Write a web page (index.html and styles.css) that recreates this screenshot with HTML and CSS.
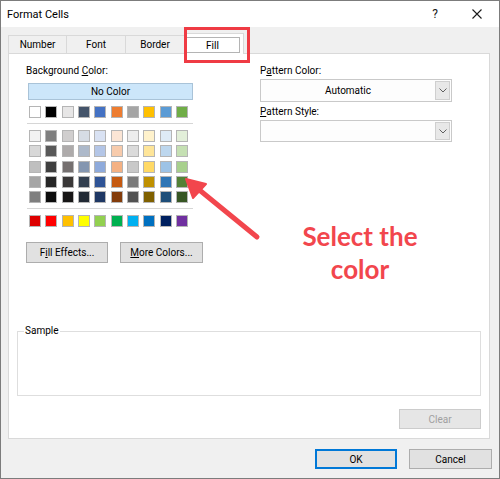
FILE: index.html
```html
<!DOCTYPE html>
<html>
<head>
<meta charset="utf-8">
<title>Format Cells</title>
<link rel="stylesheet" href="styles.css">
</head>
<body>
<div class="window">
  <div class="titlebar">
    <span class="title">Format Cells</span>
    <span class="help">?</span>
    <span class="close"><svg width="10" height="10" viewBox="0 0 10 10"><path d="M0.5 0.5 L9.5 9.5 M9.5 0.5 L0.5 9.5" stroke="#1a1a1a" stroke-width="1.1" fill="none"/></svg></span>
  </div>
  <div class="client">
    <div class="tabs">
      <div class="tab">Number</div>
      <div class="tab">Font</div>
      <div class="tab">Border</div>
      <div class="tab selected"><span class="focus">Fill</span></div>
    </div>
    <div class="panel">
      <div class="top">
        <div class="left">
          <div class="label">Background <u>C</u>olor:</div>
          <div class="nocolor">No Color</div>
          <div class="swatches theme">
            <span class="sw" style="background:#ffffff"></span>
            <span class="sw" style="background:#000000"></span>
            <span class="sw" style="background:#e7e6e6"></span>
            <span class="sw" style="background:#44546a"></span>
            <span class="sw" style="background:#4472c4"></span>
            <span class="sw" style="background:#ed7d31"></span>
            <span class="sw" style="background:#a5a5a5"></span>
            <span class="sw" style="background:#ffc000"></span>
            <span class="sw" style="background:#5b9bd5"></span>
            <span class="sw" style="background:#70ad47"></span>
          </div>
          <div class="sep"></div>
          <div class="swatches tints">
            <span class="sw" style="background:#f2f2f2"></span>
            <span class="sw" style="background:#7f7f7f"></span>
            <span class="sw" style="background:#d0cece"></span>
            <span class="sw" style="background:#d6dce4"></span>
            <span class="sw" style="background:#d9e2f3"></span>
            <span class="sw" style="background:#fbe5d5"></span>
            <span class="sw" style="background:#ededed"></span>
            <span class="sw" style="background:#fff2cc"></span>
            <span class="sw" style="background:#deebf6"></span>
            <span class="sw" style="background:#e2efd9"></span>

            <span class="sw" style="background:#d8d8d8"></span>
            <span class="sw" style="background:#595959"></span>
            <span class="sw" style="background:#aeabab"></span>
            <span class="sw" style="background:#adb9ca"></span>
            <span class="sw" style="background:#b4c6e7"></span>
            <span class="sw" style="background:#f7cbac"></span>
            <span class="sw" style="background:#dbdbdb"></span>
            <span class="sw" style="background:#fee599"></span>
            <span class="sw" style="background:#bdd7ee"></span>
            <span class="sw" style="background:#c5e0b3"></span>

            <span class="sw" style="background:#bfbfbf"></span>
            <span class="sw" style="background:#3f3f3f"></span>
            <span class="sw" style="background:#757070"></span>
            <span class="sw" style="background:#8496b0"></span>
            <span class="sw" style="background:#8eaadb"></span>
            <span class="sw" style="background:#f4b183"></span>
            <span class="sw" style="background:#c9c9c9"></span>
            <span class="sw" style="background:#ffd965"></span>
            <span class="sw" style="background:#9dc3e6"></span>
            <span class="sw" style="background:#a8d08d"></span>

            <span class="sw" style="background:#a5a5a5"></span>
            <span class="sw" style="background:#262626"></span>
            <span class="sw" style="background:#3a3838"></span>
            <span class="sw" style="background:#323f4f"></span>
            <span class="sw" style="background:#2f5496"></span>
            <span class="sw" style="background:#c55a11"></span>
            <span class="sw" style="background:#7b7b7b"></span>
            <span class="sw" style="background:#bf9000"></span>
            <span class="sw" style="background:#2e75b5"></span>
            <span class="sw" style="background:#538135"></span>

            <span class="sw" style="background:#7f7f7f"></span>
            <span class="sw" style="background:#0c0c0c"></span>
            <span class="sw" style="background:#171616"></span>
            <span class="sw" style="background:#222a35"></span>
            <span class="sw" style="background:#1f3864"></span>
            <span class="sw" style="background:#833c0b"></span>
            <span class="sw" style="background:#525252"></span>
            <span class="sw" style="background:#7f6000"></span>
            <span class="sw" style="background:#1e4e79"></span>
            <span class="sw" style="background:#375623"></span>
          </div>
          <div class="sep sep2"></div>
          <div class="swatches standard">
            <span class="sw" style="background:#dd0000"></span>
            <span class="sw" style="background:#ff0000"></span>
            <span class="sw" style="background:#ffc000"></span>
            <span class="sw" style="background:#ffff00"></span>
            <span class="sw" style="background:#92d050"></span>
            <span class="sw" style="background:#00b050"></span>
            <span class="sw" style="background:#00b0f0"></span>
            <span class="sw" style="background:#0070c0"></span>
            <span class="sw" style="background:#002060"></span>
            <span class="sw" style="background:#7030a0"></span>
          </div>
          <div class="actions">
            <button class="btn btn-fill">F<u>i</u>ll Effects...</button>
            <button class="btn btn-more"><u>M</u>ore Colors...</button>
          </div>
        </div>
        <div class="right">
          <div class="label">P<u>a</u>ttern Color:</div>
          <div class="select">
            <span class="value">Automatic</span>
            <span class="drop"><svg width="8" height="5" viewBox="0 0 8 5"><path d="M0.5 0.5 L4 4 L7.5 0.5" stroke="#606060" stroke-width="1" fill="none"/></svg></span>
          </div>
          <div class="label label-style"><u>P</u>attern Style:</div>
          <div class="select select-style">
            <span class="value"></span>
            <span class="drop"><svg width="8" height="5" viewBox="0 0 8 5"><path d="M0.5 0.5 L4 4 L7.5 0.5" stroke="#606060" stroke-width="1" fill="none"/></svg></span>
          </div>
        </div>
      </div>
      <fieldset class="sample">
        <legend>Sample</legend>
      </fieldset>
      <div class="clear-row">
        <button class="btn btn-disabled">Clear</button>
      </div>
    </div>
    <div class="footer">
      <button class="btn btn-default">OK</button>
      <button class="btn">Cancel</button>
    </div>
  </div>

  <div class="highlight"></div>
  <svg class="arrow" width="500" height="479" viewBox="0 0 500 479">
    <line x1="257" y1="237" x2="197" y2="188" stroke="#f2464d" stroke-width="5" stroke-linecap="round"/>
    <path d="M186 179 L206 184 L193 198 Z" fill="#f2464d" stroke="#f2464d" stroke-width="2" stroke-linejoin="round"/>
  </svg>
  <div class="callout">Select the<br>color</div>
</div>
</body>
</html>
```

FILE: styles.css
```css
* {
  box-sizing: border-box;
}

html, body {
  margin: 0;
  padding: 0;
}

body {
  width: 500px;
  height: 479px;
  overflow: hidden;
  background: #ffffff;
  font-family: Roboto, "Noto Sans", sans-serif;
  font-size: 10px;
  color: #000000;
}

.window {
  position: relative;
  width: 500px;
  height: 479px;
  border: 1px solid #7c7c7c;
  background: #f0f0f0;
  display: flex;
  flex-direction: column;
}

/* Title bar */
.titlebar {
  flex: none;
  height: 26px;
  background: #ffffff;
  display: flex;
  align-items: center;
  padding: 0 7px 0 6px;
}

.title {
  flex: 1;
  font-size: 11px;
  color: #000000;
}

.help {
  width: 30px;
  margin-right: 12px;
  text-align: center;
  font-size: 12px;
  color: #1a1a1a;
}

.close {
  width: 30px;
  height: 26px;
  display: flex;
  align-items: center;
  justify-content: center;
}

/* Client area */
.client {
  flex: 1;
  display: flex;
  flex-direction: column;
  padding: 8px 9px 0 7px;
}

.tabs {
  flex: none;
  height: 18px;
  display: flex;
  align-items: flex-start;
  position: relative;
  z-index: 2;
}

.tab {
  width: 60px;
  height: 18px;
  margin-left: -1px;
  border: 1px solid #d9d9d9;
  border-bottom: none;
  background: #f0f0f0;
  display: flex;
  align-items: center;
  justify-content: center;
  color: #000000;
}

.tab:first-child {
  margin-left: 0;
  width: 59px;
}

.tab.selected {
  height: 21px;
  margin-top: -2px;
  background: #ffffff;
  align-items: flex-start;
  padding-top: 3px;
}

.focus {
  width: 55px;
  height: 16px;
  border: 1px solid #b4b4b4;
  display: flex;
  align-items: center;
  justify-content: center;
  margin-left: -3px;
}

.panel {
  flex: none;
  height: 386px;
  background: #ffffff;
  border: 1px solid #d9d9d9;
  padding: 9px 8px 9px 8px;
  position: relative;
  z-index: 1;
  display: flex;
  flex-direction: column;
}

.top {
  display: flex;
  margin-left: 9px;
  height: 200px;
}

.left {
  width: 234px;
  display: flex;
  flex-direction: column;
}

.right {
  width: 192px;
  display: flex;
  flex-direction: column;
}

.label {
  height: 16px;
  line-height: 16px;
  white-space: nowrap;
}

.nocolor {
  width: 165px;
  height: 17px;
  margin: 4px 0 0 2px;
  background: #cce6fa;
  border: 1px solid #a9c3d8;
  text-align: center;
  line-height: 15px;
}

.swatches {
  display: grid;
  grid-template-columns: repeat(10, 12px);
  grid-auto-rows: 12px;
  column-gap: 4.33px;
  row-gap: 3.33px;
  margin-left: 3px;
}

.sw {
  display: block;
  width: 12px;
  height: 12px;
  border: 1px solid #b5b5b5;
}

.theme {
  margin-top: 6px;
}

.sep {
  width: 166px;
  height: 1px;
  margin: 5px 0 0 1px;
  background: #d6d6d6;
}

.tints {
  margin-top: 6px;
}

.sep2 {
  margin-top: 4.67px;
}

.standard {
  margin-top: 6px;
}

.actions {
  display: flex;
  gap: 12px;
  margin-top: 15px;
}

.btn {
  font: inherit;
  color: #000000;
  height: 20px;
  padding: 0;
  background: #e1e1e1;
  border: 1px solid #adadad;
  border-radius: 0;
}

.btn-fill {
  width: 82px;
  height: 21px;
}

.btn-more {
  width: 83px;
  height: 21px;
}

.select {
  display: flex;
  height: 23px;
  border: 1px solid #c9c9c9;
  background: #fdfdfd;
}

.select-style {
  height: 22px;
}

.select .value {
  flex: 1;
  text-align: center;
  line-height: 21px;
}

.select .drop {
  width: 15px;
  margin: 1px 1px 1px 0;
  border: 1px solid #cfcfcf;
  background: #e8e8e8;
  display: flex;
  align-items: center;
  justify-content: center;
}

.label-style {
  margin-top: 2px;
}

/* Sample */
.sample {
  margin: 60px 0 0 0;
  padding: 0;
  min-width: 0;
  height: 73px;
  border: 1px solid #dedede;
}

.sample legend {
  margin-left: 6px;
  padding: 0 1px;
  line-height: 16px;
  font-size: 10px;
}

.clear-row {
  display: flex;
  justify-content: flex-end;
  margin-top: 13px;
}

.btn-disabled {
  width: 82px;
  background: #e6e6e6;
  border-color: #cccccc;
  color: #a0a0a0;
}

/* Footer */
.footer {
  flex: none;
  height: 39px;
  display: flex;
  justify-content: flex-end;
  align-items: flex-start;
  gap: 12px;
  padding-top: 10px;
  margin-right: -2px;
}

.footer .btn {
  width: 83px;
}

.footer .btn-default {
  width: 82px;
  border-color: #0078d7;
  box-shadow: inset 0 0 0 1px #0078d7;
}

/* Annotations */
.highlight {
  position: absolute;
  left: 183px;
  top: 26px;
  width: 66px;
  height: 36px;
  border: 3px solid #ef3b44;
  z-index: 5;
}

.arrow {
  position: absolute;
  left: -1px;
  top: -1px;
  z-index: 5;
  pointer-events: none;
}

.callout {
  position: absolute;
  left: 289px;
  top: 219px;
  width: 140px;
  text-align: center;
  font-family: Lato, "Noto Sans", sans-serif;
  font-weight: 700;
  font-size: 26px;
  line-height: 33px;
  color: #f2464d;
  z-index: 5;
}
```
